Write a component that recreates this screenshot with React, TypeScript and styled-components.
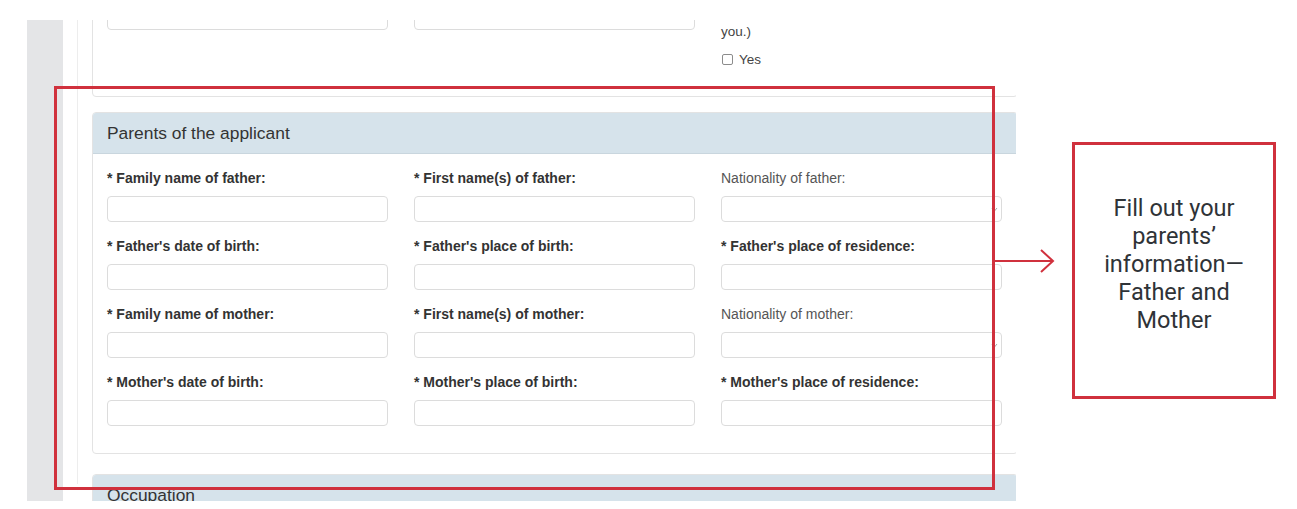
import styled, { createGlobalStyle } from "styled-components";

const GlobalStyle = createGlobalStyle`
  html, body {
    margin: 0;
    padding: 0;
    background: #ffffff;
  }
  body {
    font-family: "Liberation Sans", Arial, sans-serif;
    color: #333333;
  }
  * {
    box-sizing: border-box;
  }
`;

/* ================= PAGE ================= */
const Page = styled.div`
  position: relative;
  width: 1297px;
  height: 509px;
  display: flex;
  align-items: flex-start;
  padding: 20px 0 0 27px;
  overflow: hidden;
`;

/* ================= SCREENSHOT ================= */
const Shot = styled.div`
  width: 989px;
  height: 481px;
  flex-shrink: 0;
  display: flex;
  overflow: hidden;
  background: #ffffff;
`;

const Sidebar = styled.div`
  width: 36px;
  flex-shrink: 0;
  background: #e4e5e7;
`;

const Main = styled.div`
  flex: 1;
  padding-left: 14px;
`;

const Container = styled.div`
  height: 100%;
  border-left: 1px solid #ededed;
  padding-left: 14px;
`;

const Stack = styled.div`
  display: flex;
  flex-direction: column;
  margin-top: -17px;
`;

const Card = styled.div<{ $gap?: number }>`
  width: 926px;
  flex-shrink: 0;
  margin-top: ${(p) => p.$gap ?? 0}px;
  border: 1px solid #e3e3e3;
  border-radius: 4px;
  background: #ffffff;
  overflow: hidden;
`;

const CardHeader = styled.div`
  padding: 10px 14px;
  background: #d6e3eb;
  border-bottom: 1px solid #c9d6de;
  font-size: 17.4px;
  line-height: 20px;
  color: #333333;
`;

const CardBody = styled.div<{ $pad: string }>`
  padding: ${(p) => p.$pad};
`;

const Grid = styled.div`
  display: grid;
  grid-template-columns: repeat(3, 281px);
  column-gap: 26px;
  row-gap: 15px;
  align-items: start;
`;

const Field = styled.div`
  display: flex;
  flex-direction: column;
`;

const Label = styled.label<{ $optional?: boolean }>`
  font-size: 14px;
  line-height: 18px;
  margin-bottom: 9px;
  font-weight: ${(p) => (p.$optional ? 400 : 700)};
  color: ${(p) => (p.$optional ? "#555555" : "#333333")};
  white-space: nowrap;
`;

const Input = styled.input`
  width: 100%;
  height: 26px;
  margin: 0;
  padding: 0 8px;
  border: 1px solid #dcdcdc;
  border-radius: 4px;
  background: #ffffff;
  font-family: inherit;
  font-size: 13px;
`;

const SelectWrap = styled.div`
  position: relative;
  height: 26px;
  border: 1px solid #dcdcdc;
  border-radius: 4px;
  background: #ffffff;
`;

const Chevron = styled.svg`
  position: absolute;
  right: 3px;
  top: 10px;
`;

const Hint = styled.div`
  margin-top: 18px;
  font-size: 13.5px;
  line-height: 20px;
  color: #444444;
`;

const CheckRow = styled.label`
  margin-top: 9px;
  height: 16px;
  display: flex;
  align-items: center;
  gap: 6px;
  font-size: 13.5px;
  color: #444444;
`;

const Check = styled.input`
  appearance: none;
  width: 11px;
  height: 11px;
  margin: 0 0 0 1px;
  border: 1px solid #8c8c8c;
  border-radius: 2px;
  background: #ffffff;
`;

/* ================= ANNOTATION ================= */
const Frame = styled.div`
  position: absolute;
  left: 54px;
  top: 86px;
  width: 941px;
  height: 404px;
  border: 3px solid #d0313d;
  pointer-events: none;
`;

const Arrow = styled.svg`
  position: absolute;
  left: 994px;
  top: 249px;
`;

const Note = styled.div`
  width: 204px;
  height: 257px;
  margin: 122px 0 0 56px;
  flex-shrink: 0;
  border: 3px solid #d0313d;
  display: flex;
  align-items: center;
  justify-content: center;
  padding-bottom: 14px;
`;

const NoteText = styled.p`
  max-width: 165px;
  margin: 0;
  text-align: center;
  font-family: Roboto, "Noto Sans", sans-serif;
  font-size: 23.5px;
  line-height: 28px;
  color: #2f3337;
`;

type FieldDef = { label: string; select?: boolean };

const parents: FieldDef[] = [
  { label: "* Family name of father:" },
  { label: "* First name(s) of father:" },
  { label: "Nationality of father:", select: true },
  { label: "* Father's date of birth:" },
  { label: "* Father's place of birth:" },
  { label: "* Father's place of residence:" },
  { label: "* Family name of mother:" },
  { label: "* First name(s) of mother:" },
  { label: "Nationality of mother:", select: true },
  { label: "* Mother's date of birth:" },
  { label: "* Mother's place of birth:" },
  { label: "* Mother's place of residence:" },
];

function SelectBox() {
  return (
    <SelectWrap>
      <Chevron width="7" height="5" viewBox="0 0 7 5">
        <path d="M1 1.5 L3.5 4 L6 1" fill="none" stroke="#a5a5a5" strokeWidth="1" />
      </Chevron>
    </SelectWrap>
  );
}

export default function App() {
  return (
    <>
      <GlobalStyle />
      <Page>
        <Shot>
          <Sidebar />
          <Main>
            <Container>
              <Stack>
                {/* previous section, scrolled mostly out of view */}
                <Card>
                  <CardBody $pad="0 14px 29px">
                    <Grid>
                      <Input />
                      <Input />
                      <div>
                        <Hint>you.)</Hint>
                        <CheckRow>
                          <Check type="checkbox" />
                          Yes
                        </CheckRow>
                      </div>
                    </Grid>
                  </CardBody>
                </Card>

                {/* parents */}
                <Card $gap={15}>
                  <CardHeader>Parents of the applicant</CardHeader>
                  <CardBody $pad="15px 14px 27px">
                    <Grid>
                      {parents.map((f) => (
                        <Field key={f.label}>
                          <Label $optional={f.select}>{f.label}</Label>
                          {f.select ? <SelectBox /> : <Input />}
                        </Field>
                      ))}
                    </Grid>
                  </CardBody>
                </Card>

                <Card $gap={20}>
                  <CardHeader>Occupation</CardHeader>
                </Card>
              </Stack>
            </Container>
          </Main>
        </Shot>

        <Note>
          <NoteText>Fill out your parents’ information—Father and Mother</NoteText>
        </Note>

        <Frame />
        <Arrow width="62" height="24" viewBox="0 0 62 24">
          <path d="M0 12 H59" stroke="#d0313d" strokeWidth="2" fill="none" />
          <path d="M47 1 L59 12 L47 23" stroke="#d0313d" strokeWidth="2" fill="none" />
        </Arrow>
      </Page>
    </>
  );
}
